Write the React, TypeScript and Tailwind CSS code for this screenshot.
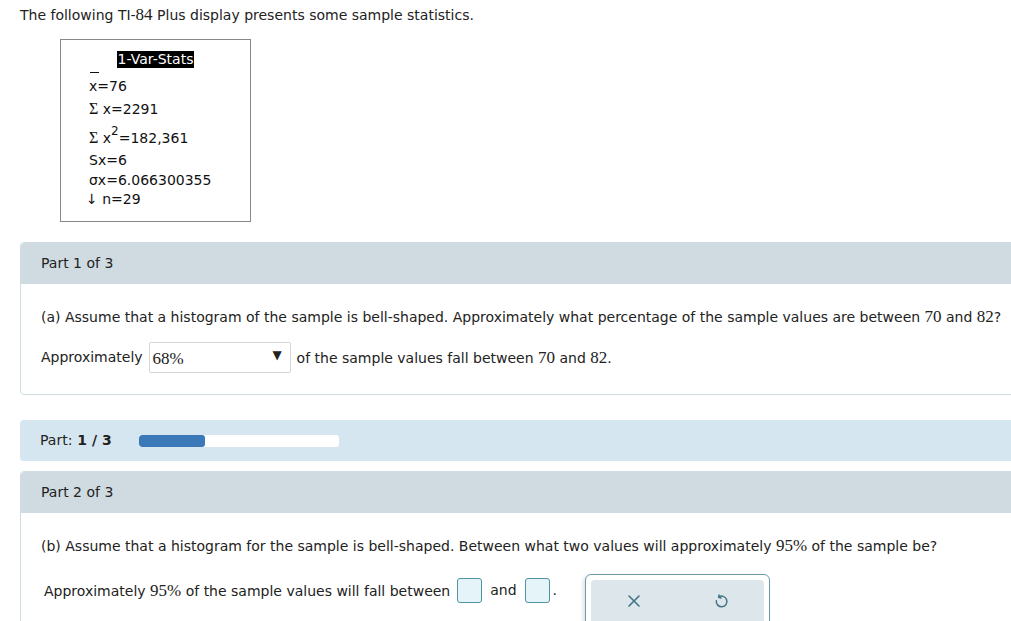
import React from "react";

const sans = { fontFamily: '"DejaVu Sans", Verdana, sans-serif' } as React.CSSProperties;

function N({ children }: { children: React.ReactNode }) {
  return <span className="font-['Liberation_Serif',serif] text-[17px]">{children}</span>;
}

export default function App() {
  return (
    <div className="w-[1011px] h-[621px] overflow-hidden bg-white text-[#222] text-[14px]" style={sans}>
      <div className="pl-[20px] pt-[6px]">
        <p className="leading-[18px]">
          The following TI-<N>84</N> Plus display presents some sample statistics.
        </p>
        <div className="ml-[40px] mt-[15px] w-[191px] h-[183px] border border-[#888] pt-[11px] text-[14px] text-[#111]">
          <div className="flex justify-center">
            <span className="bg-black text-white px-[1px] leading-[17px]">1-Var-Stats</span>
          </div>
          <div className="pl-[28px] mt-[8px] leading-[20px]">
            <div className="relative">
              <span className="relative inline-block">
                <span className="absolute left-[1px] top-[-4px] w-[9px] h-[1px] bg-[#111]" />
                x
              </span>
              =76
            </div>
            <div className="mt-[3px]">
              <span className="font-['Liberation_Serif',serif] text-[16px]">Σ</span> x=2291
            </div>
            <div className="mt-[9px]">
              <span className="font-['Liberation_Serif',serif] text-[16px]">Σ</span> x
              <span className="relative top-[-8px] text-[12px]">2</span>=182,361
            </div>
            <div className="mt-[1px]">Sx=6</div>
            <div>σx=6.066300355</div>
            <div className="-ml-[3px] -mt-[1px]">↓ n=29</div>
          </div>
        </div>

        <div className="mt-[20px] w-[1000px] rounded-[4px] border border-[#cfdde3]">
          <div className="h-[41px] bg-[#d0dbe1] flex items-center pl-[20px] rounded-t-[4px]">Part 1 of 3</div>
          <div className="pl-[20px] pt-[21px] pb-[21px]">
            <p className="leading-[24px] whitespace-nowrap">
              (a) Assume that a histogram of the sample is bell-shaped. Approximately what percentage of the sample values are between <N>70</N> and <N>82</N>?
            </p>
            <div className="mt-[13px] flex items-center">
              <span>Approximately</span>
              <div className="ml-[6px] w-[142px] h-[31px] border border-[#d6d6d6] rounded-[2px] flex items-center justify-between pl-[3px] pr-[8px]">
                <span className="font-['Liberation_Serif',serif] text-[17px] mt-[2px]">68%</span>
                <span className="text-[12px] -mt-[6px]">▼</span>
              </div>
              <span className="ml-[6px]">
                of the sample values fall between <N>70</N> and <N>82</N>.
              </span>
            </div>
          </div>
        </div>

        <div className="mt-[25px] w-[1000px] h-[41px] rounded-[4px] bg-[#d6e6f0] flex items-center pl-[20px]">
          <span>Part:</span>
          <span className="font-bold ml-[5px]">1 / 3</span>
          <div className="ml-[27px] w-[200px] h-[12px] bg-white rounded-[3px] overflow-hidden">
            <div className="w-[66px] h-full bg-[#3b78b8] rounded-[3px]" />
          </div>
        </div>

        <div className="mt-[10px] w-[1000px] rounded-[4px] border border-[#cfdde3]">
          <div className="h-[41px] bg-[#d0dbe1] flex items-center pl-[20px] rounded-t-[4px]">Part 2 of 3</div>
          <div className="pl-[20px] pt-[21px] pb-[20px]">
            <p className="leading-[24px] whitespace-nowrap">
              (b) Assume that a histogram for the sample is bell-shaped. Between what two values will approximately <N>95%</N> of the sample be?
            </p>
            <div className="mt-[16px] flex items-start">
              <div className="flex items-center pl-[3px] pt-[4px]">
                <span>
                  Approximately <N>95%</N> of the sample values will fall between
                </span>
                <span className="ml-[7px] w-[25px] h-[25px] border border-[#4e94a4] rounded-[3px] bg-[#e4f4f8]" />
                <span className="ml-[8px]">and</span>
                <span className="ml-[8px] w-[25px] h-[25px] border border-[#4e94a4] rounded-[3px] bg-[#e4f4f8]" />
                <span className="ml-[3px]">.</span>
              </div>
              <div className="ml-[28px] w-[185px] h-[60px] border border-[#6c9aa6] rounded-[6px] p-[5px] shadow-[-2px_2px_4px_rgba(0,0,0,0.12)]">
                <div className="h-full bg-[#dde6ea] rounded-[4px] flex items-start pt-[14px]">
                  <div className="w-[88px] flex justify-center">
                    <svg width="14" height="14" viewBox="0 0 14 14" fill="none" stroke="#3f7585" strokeWidth="1.6" strokeLinecap="round">
                      <path d="M2 2 L12 12 M12 2 L2 12" />
                    </svg>
                  </div>
                  <div className="w-[88px] flex justify-center">
                    <svg width="16" height="16" viewBox="0 0 24 24" fill="none" stroke="#3f7585" strokeWidth="2.2" strokeLinecap="round" strokeLinejoin="round">
                      <path d="M8.5 4.5 A8 8 0 1 1 5 10" />
                      <path d="M9 1.5 L8.5 5 L12 6" />
                    </svg>
                  </div>
                </div>
              </div>
            </div>
          </div>
        </div>
      </div>
    </div>
  );
}
